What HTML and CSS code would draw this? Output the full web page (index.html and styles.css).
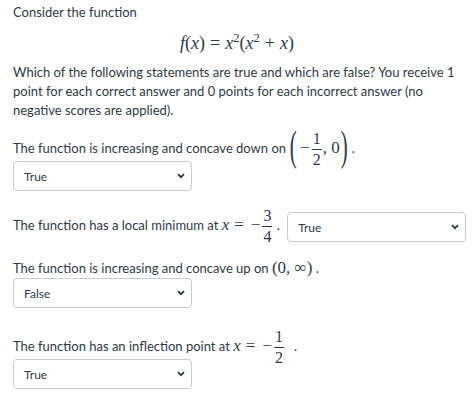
FILE: index.html
```html
<!DOCTYPE html>
<html>
<head>
<meta charset="utf-8">
<link rel="stylesheet" href="styles.css">
</head>
<body>
<div class="page">
  <p class="intro">Consider the function</p>
  <div class="display"><span class="m big"><i>f</i>(<i>x</i>)<span class="op">=</span><i>x</i><sup>2</sup>(<i>x</i><sup>2</sup><span class="op">+</span><i>x</i>)</span></div>
  <p class="para">Which of the following statements are true and which are false? You receive 1 point for each correct answer and 0 points for each incorrect answer (no negative scores are applied).</p>

  <div class="stmt s1">The function is increasing and concave down on <span class="m"><span class="bigp">(</span><span class="minus">−</span><span class="frac"><span class="num">1</span><span class="den">2</span></span>, 0<span class="bigp">)</span></span> .</div>
  <div class="sel sel1"><span>True</span><svg width="8" height="6" viewBox="0 0 8 6"><path d="M1 1.2 L4 4.2 L7 1.2" fill="none" stroke="#2d3b45" stroke-width="1.8"/></svg></div>

  <div class="stmt s2">The function has a local minimum at <span class="m"><i>x</i><span class="op">=</span><span class="minus">−</span><span class="frac"><span class="num">3</span><span class="den">4</span></span></span> . <div class="sel inl"><span>True</span><svg width="8" height="6" viewBox="0 0 8 6"><path d="M1 1.2 L4 4.2 L7 1.2" fill="none" stroke="#2d3b45" stroke-width="1.8"/></svg></div></div>

  <div class="stmt s3">The function is increasing and concave up on <span class="m">(0, ∞)</span> .</div>
  <div class="sel"><span>False</span><svg width="8" height="6" viewBox="0 0 8 6"><path d="M1 1.2 L4 4.2 L7 1.2" fill="none" stroke="#2d3b45" stroke-width="1.8"/></svg></div>

  <div class="stmt s4">The function has an inflection point at <span class="m"><i>x</i><span class="op">=</span><span class="minus">−</span><span class="frac"><span class="num">1</span><span class="den">2</span></span></span><span class="gap"></span>.</div>
  <div class="sel sel4"><span>True</span><svg width="8" height="6" viewBox="0 0 8 6"><path d="M1 1.2 L4 4.2 L7 1.2" fill="none" stroke="#2d3b45" stroke-width="1.8"/></svg></div>
</div>
</body>
</html>
```
FILE: styles.css
```css
html, body {
  margin: 0;
  padding: 0;
  background: #ffffff;
}
.page {
  padding: 0 13px;
  font-family: Lato, "Liberation Sans", sans-serif;
  font-size: 13px;
  line-height: 19px;
  color: #2d3b45;
}
.intro {
  margin: 3px 0 0 0;
}
.display {
  text-align: center;
  margin: 12px 0 0 0;
}
.m {
  font-family: "Liberation Serif", "Times New Roman", serif;
  font-size: 17px;
}
.m.big {
  font-size: 18px;
}
.m i {
  font-style: italic;
}
.op {
  margin: 0 5px;
}
.m sup {
  font-size: 12.5px;
  vertical-align: 7px;
  line-height: 0;
}
.para {
  margin: 9px 0 0 0;
}
.stmt {
  margin: 0;
}
.bigp {
  display: inline-block;
  font-size: 26px;
  line-height: 19px;
  transform: scale(0.8, 1.6);
  vertical-align: -2px;
}
.minus {
  margin: 0 1px 0 2px;
}
.frac {
  display: inline-flex;
  flex-direction: column;
  align-items: center;
  vertical-align: middle;
  font-size: 16px;
  line-height: 14px;
  margin: 0 1px;
}
.num {
  padding: 0 1px 3px;
  border-bottom: 1px solid #2d3b45;
}
.den {
  padding-top: 3px;
}
.gap {
  display: inline-block;
  width: 9px;
}
.sel {
  box-sizing: border-box;
  width: 179px;
  height: 30px;
  border: 1px solid #c7cdd1;
  border-radius: 4px;
  display: flex;
  align-items: center;
  justify-content: space-between;
  padding: 0 6px 0 10px;
  font-family: Lato, "Liberation Sans", sans-serif;
  font-size: 12px;
  line-height: 19px;
  color: #2d3b45;
  background: #fff;
  margin-top: 0;
}
.sel.inl {
  display: inline-flex;
  vertical-align: middle;
  margin: 0 0 0 4px;
}
.s1 {
  margin-top: 12px;
}
.sel1 {
  margin-top: -6px;
}
.s2 {
  margin-top: 18px;
  white-space: nowrap;
}
.s3 {
  margin-top: 14px;
}
.s4 {
  margin-top: 22px;
}
.sel4 {
  margin-top: -6px;
}
```
